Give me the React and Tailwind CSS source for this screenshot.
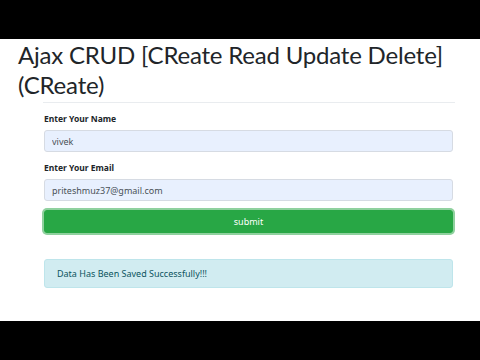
import React from 'react';

export default function App() {
  return (
    <div className="w-[480px] h-[360px] bg-black flex flex-col" style={{ fontFamily: '"Noto Sans", "Open Sans", sans-serif' }}>
      <div className="h-[39px] shrink-0" />
      <div className="h-[282px] bg-white shrink-0 flex flex-col">
        <h1 className="pl-[18px] pr-[20px] pt-[1px] text-[24px] leading-[30px] tracking-[-0.2px] text-[#212529] font-normal font-['Lato',sans-serif]">
          Ajax CRUD [CReate Read Update Delete] (CReate)
        </h1>
        <div className="ml-[43px] mr-[25px] mt-[2px] border-t border-[#e9ecef]" />
        <form className="ml-[44px] mr-[27px] mt-[10px] flex flex-col">
          <label className="text-[8.5px] leading-[12px] font-bold text-[#212529]">Enter Your Name</label>
          <input
            defaultValue="vivek"
            className="mt-[5px] h-[22px] rounded-[3px] border border-[#d6dbe3] bg-[#e8f0fe] px-[7px] text-[9px] text-[#495057] outline-none"
          />
          <label className="mt-[10px] text-[8.5px] leading-[12px] font-bold text-[#212529]">Enter Your Email</label>
          <input
            defaultValue="priteshmuz37@gmail.com"
            className="mt-[5px] h-[22px] rounded-[3px] border border-[#d6dbe3] bg-[#e8f0fe] px-[7px] text-[9px] text-[#495057] outline-none"
          />
          <button
            type="button"
            className="mt-[9px] h-[23px] rounded-[3px] bg-[#28a745] text-white text-[9px] ring-2 ring-[#8fd19e] border border-[#28a745]"
          >
            submit
          </button>
        </form>
        <div className="ml-[44px] mr-[27px] mt-[26px] h-[29px] rounded-[3px] bg-[#d1ecf1] border border-[#bee5eb] flex items-center px-[12px] text-[9px] text-[#0c5460]">
          Data Has Been Saved Successfully!!!
        </div>
      </div>
      <div className="flex-1" />
    </div>
  );
}
